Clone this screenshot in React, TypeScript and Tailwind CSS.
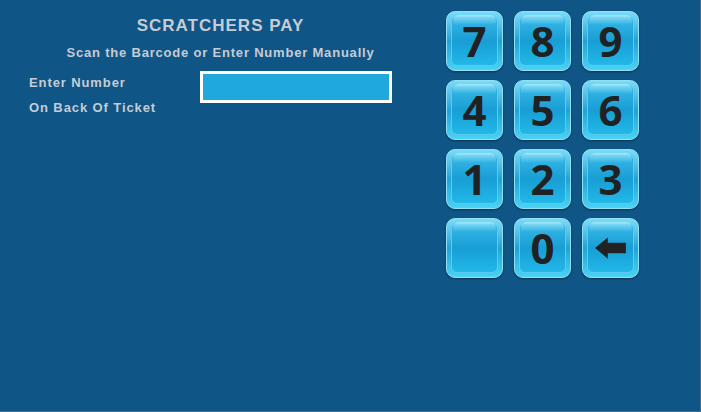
import React from "react";

const keys = ["7", "8", "9", "4", "5", "6", "1", "2", "3", "", "0", "back"];

const KeyButton: React.FC<{ label: string }> = ({ label }) => (
  <div className="relative w-[57px] h-[60px] rounded-[9px] border border-[#8fe2f8] bg-gradient-to-b from-[#7adbf7] via-[#1ea3d8] to-[#49d3f4] shadow-[0_1px_2px_rgba(0,0,0,0.45)] flex items-center justify-center overflow-hidden">
    {/* inner bevel */}
    <div className="absolute inset-[4px] rounded-[6px] bg-gradient-to-b from-[#35b8e7] via-[#189ed4] to-[#22b8e8] border border-[#5ccbef]" />
    <div className="absolute left-[6px] right-[6px] top-[3px] h-[10px] rounded-t-[6px] bg-gradient-to-b from-[#b2effd] to-transparent opacity-70" />
    {label === "back" ? (
      <svg className="relative" width="34" height="24" viewBox="0 0 32 22">
        <path d="M1 11 L13 1 L13 6 L30 6 L30 16 L13 16 L13 21 Z" fill="#222" />
      </svg>
    ) : (
      <span className="relative text-[42px] leading-none font-bold text-[#1f2123] font-['Open_Sans',sans-serif]">
        {label}
      </span>
    )}
  </div>
);

export default function App() {
  return (
    <div className="w-[701px] h-[412px] bg-[#0f5586] flex font-['Liberation_Sans',Arial,sans-serif] font-bold text-[#c6ccd4] border-r border-b border-[#3a6f96]">
      <div className="w-[441px] flex flex-col">
        <div className="pt-[16px] text-center text-[17px] leading-[20px] tracking-[1px]">SCRATCHERS PAY</div>
        <div className="pt-[9px] text-center text-[13px] leading-[16px] tracking-[0.8px]">
          Scan the Barcode or Enter Number Manually
        </div>
        <div className="flex pt-[10px]">
          <div className="pl-[29px] w-[200px] flex flex-col text-[13px] leading-[16px] tracking-[0.9px]">
            <div className="pt-[4px]">Enter Number</div>
            <div className="pt-[9px]">On Back Of Ticket</div>
          </div>
          <div className="w-[192px] h-[32px] border-[3px] border-white bg-[#1ea8dc]" />
        </div>
      </div>
      <div className="pl-[5px] pt-[11px] grid grid-cols-[57px_57px_57px] gap-x-[11px] gap-y-[9px] content-start">
        {keys.map((k, i) => (
          <KeyButton key={i} label={k} />
        ))}
      </div>
    </div>
  );
}
